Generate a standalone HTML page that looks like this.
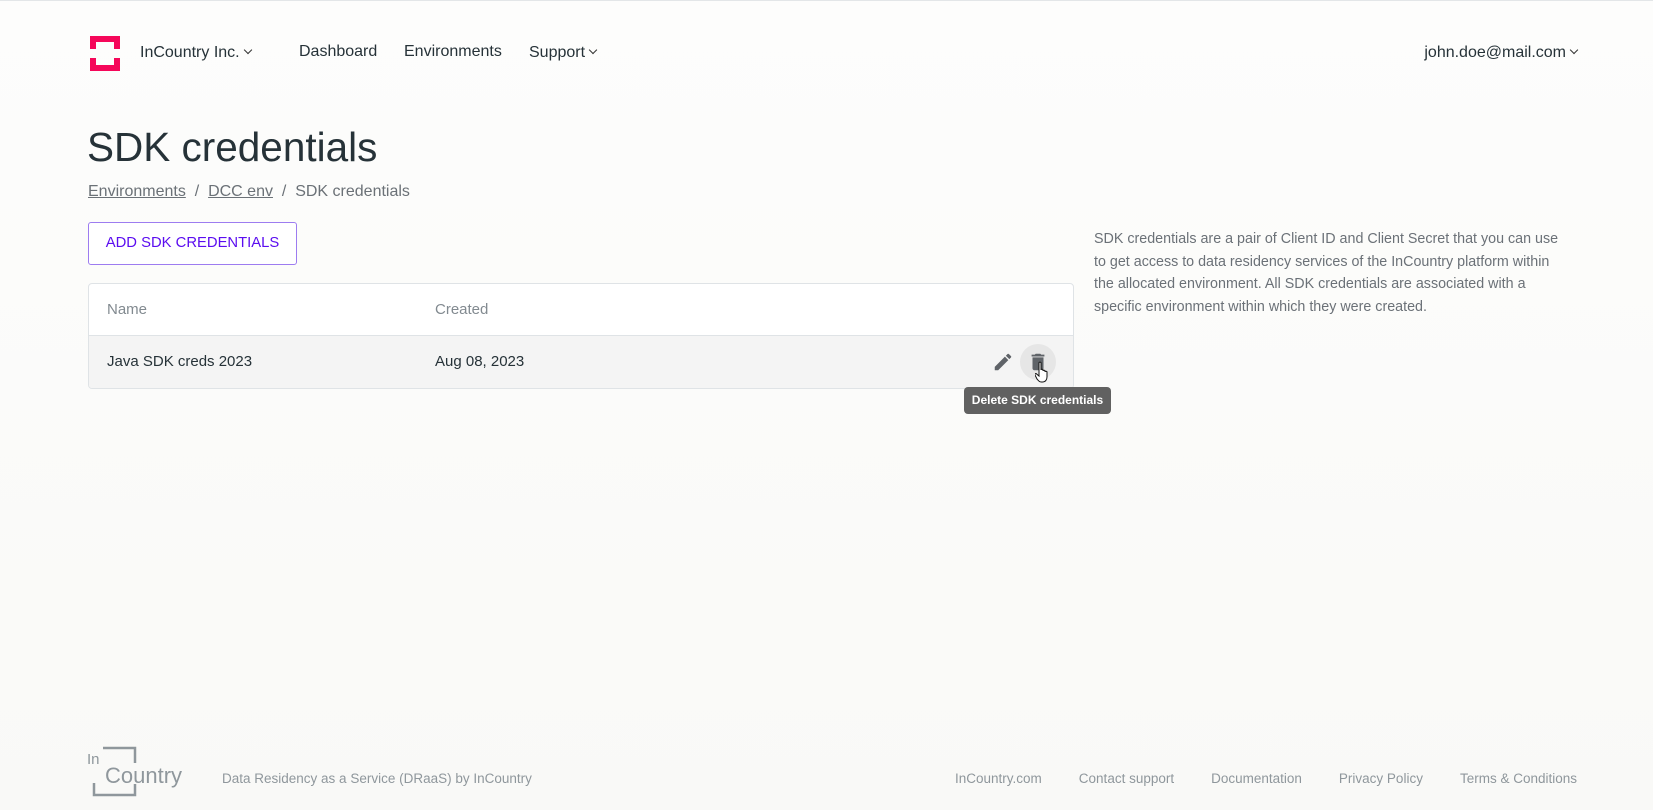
<!DOCTYPE html>
<html><head><meta charset="utf-8"><style>
*{box-sizing:border-box;margin:0;padding:0}
body{width:1653px;height:810px;overflow:hidden;background:linear-gradient(#fdfdfc,#f9f9f7);font-family:"Liberation Sans",sans-serif;color:#263238;position:relative;border-top:1px solid #e3e6e8}
.a{position:absolute;white-space:nowrap}
.nav{font-size:16px;color:#263238}
.chev{display:inline-block;width:6px;height:6px;border-right:1.3px solid #333;border-bottom:1.3px solid #333;transform:rotate(45deg);margin-left:5px;position:relative;top:-4px}
.bc{font-size:16px;color:#6b7177}
.bc u{text-decoration:underline}
.tbl{position:absolute;left:88px;top:282px;width:986px;height:106px;border:1px solid #dfe3e6;border-radius:4px;background:#fff;overflow:hidden}
.foot{font-size:13.5px;color:#8f979c}
</style></head><body>
<svg class="a" style="left:90px;top:35px" width="30" height="35" viewBox="0 0 30 35"><path d="M0 0H30V13H24V6H6V13H0Z M0 22H6V29H24V22H30V35H0Z" fill="#f5075a"/></svg>
<div class="a nav" style="left:140px;top:43px">InCountry Inc.<span class="chev"></span></div>
<div class="a nav" style="left:299px;top:42px">Dashboard</div>
<div class="a nav" style="left:404px;top:42px">Environments</div>
<div class="a nav" style="left:529px;top:43px">Support<span class="chev"></span></div>
<div class="a nav" style="right:76px;top:43px">john.doe@mail.com<span class="chev"></span></div>
<div class="a" style="left:87px;top:123px;font-size:40.5px;color:#263238">SDK credentials</div>
<div class="a bc" style="left:88px;top:182px"><u>Environments</u>&nbsp;&nbsp;/&nbsp;&nbsp;<u>DCC env</u>&nbsp;&nbsp;/&nbsp;&nbsp;SDK credentials</div>
<div class="a" style="left:88px;top:221px;width:209px;height:43px;border:1px solid #9d7cf0;border-radius:3px;color:#5b0df0;font-size:14.8px;text-align:center;line-height:41px;background:#fff">ADD SDK CREDENTIALS</div>
<div class="tbl">
<div style="height:52px;border-bottom:1px solid #dfe3e6;position:relative;font-size:15px;color:#828a90">
<span class="a" style="left:18px;top:17px">Name</span><span class="a" style="left:346px;top:17px">Created</span></div>
<div style="height:54px;background:#f4f4f4;position:relative;font-size:15px;color:#263238">
<span class="a" style="left:18px;top:17px">Java SDK creds 2023</span><span class="a" style="left:346px;top:17px">Aug 08, 2023</span>
<svg class="a" style="left:903px;top:15px" width="22" height="22" viewBox="0 0 24 24"><path d="M3 17.25V21h3.75L17.81 9.94l-3.75-3.75L3 17.25zM20.71 7.04a1 1 0 000-1.41l-2.34-2.34a1 1 0 00-1.41 0l-1.83 1.83 3.75 3.75 1.83-1.83z" fill="#5f6368"/></svg>
<div class="a" style="left:931px;top:8px;width:36px;height:36px;border-radius:50%;background:#e6e6e6"></div>
<svg class="a" style="left:938px;top:15px" width="22" height="22" viewBox="0 0 24 24"><path d="M6 19c0 1.1.9 2 2 2h8c1.1 0 2-.9 2-2V7H6v12zM19 4h-3.5l-1-1h-5l-1 1H5v2h14V4z" fill="#5f6368"/></svg>
<svg class="a" style="left:946px;top:25px" width="16" height="22" viewBox="0 0 16 22"><path d="M4 2c0-1.2 2-1.2 2 0v7c0-1 2-1 2 0v1c0-1 2-1 2 0v1c0-1 2-1 2 0v5c0 3-2 5-4 5H6c-2 0-3-2-4-3L0 14c-.5-1 .8-2 1.6-1L4 15z" fill="#fff" stroke="#111" stroke-width="1"/></svg>
</div></div>
<div class="a" style="left:964px;top:386px;width:147px;height:27px;background:#616161;border-radius:4px;color:#fff;font-size:12px;font-weight:bold;text-align:center;line-height:27px">Delete SDK credentials</div>
<div class="a" style="left:1094px;top:227px;width:473px;white-space:normal;font-size:14.3px;line-height:22.5px;color:#6b7177">SDK credentials are a pair of Client ID and Client Secret that you can use to get access to data residency services of the InCountry platform within the allocated environment. All SDK credentials are associated with a specific environment within which they were created.</div>
<svg class="a" style="left:80px;top:735px" width="110" height="65" viewBox="0 0 110 65">
<path d="M23 12H55V27 M55 48V59H14V47" fill="none" stroke="#8f979c" stroke-width="2.5"/>
<text x="7" y="28" font-family="Liberation Sans" font-size="15" fill="#8f979c">In</text>
<text x="25" y="47" font-family="Liberation Sans" font-size="22" fill="#8f979c">Country</text></svg>
<div class="a foot" style="left:222px;top:770px">Data Residency as a Service (DRaaS) by InCountry</div>
<div class="a foot" style="right:76px;top:770px">InCountry.com<span style="margin-left:37px">Contact support</span><span style="margin-left:37px">Documentation</span><span style="margin-left:37px">Privacy Policy</span><span style="margin-left:37px">Terms &amp; Conditions</span></div>
</body></html>
